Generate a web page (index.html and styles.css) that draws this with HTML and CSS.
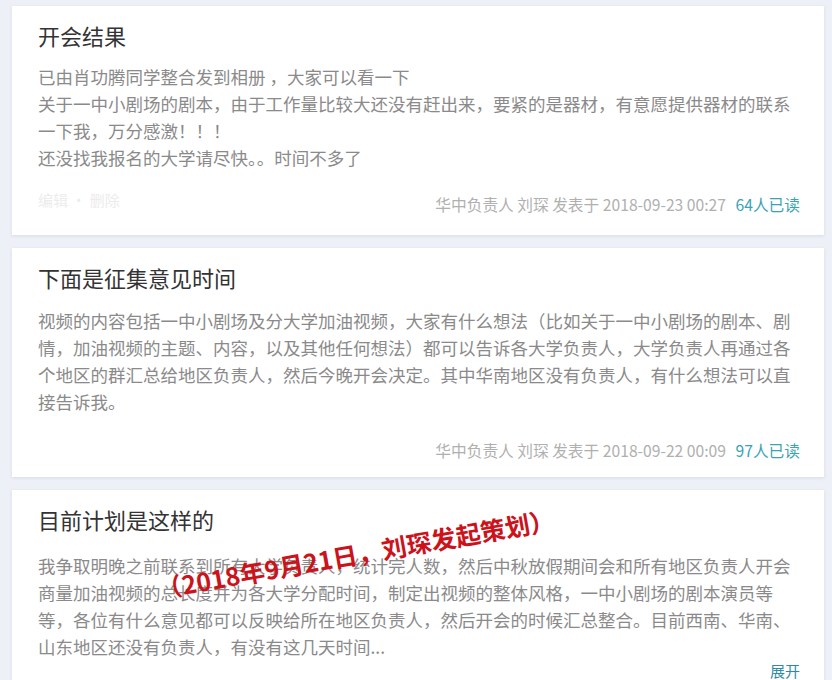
FILE: index.html
```html
<!DOCTYPE html>
<html lang="zh-CN">
<head>
<meta charset="UTF-8" />
<meta name="viewport" content="width=device-width, initial-scale=1" />
<title>公告</title>
<link rel="stylesheet" href="styles.css">
</head>
<body>

<div class="list">

  <div class="card">
    <div class="title">开会结果</div>
    <div class="content">已由肖功腾同学整合发到相册 ，大家可以看一下<br>关于一中小剧场的剧本，由于工作量比较大还没有赶出来，要紧的是器材，有意愿提供器材的联系一下我，万分感激！！！<br>还没找我报名的大学请尽快。。时间不多了</div>
    <div class="foot">
      <div class="ops">编辑 · 删除</div>
      <div class="meta">华中负责人 刘琛 发表于 2018-09-23 00:27 <span class="read">64人已读</span></div>
    </div>
  </div>

  <div class="card second">
    <div class="title">下面是征集意见时间</div>
    <div class="content">视频的内容包括一中小剧场及分大学加油视频，大家有什么想法（比如关于一中小剧场的剧本、剧情，加油视频的主题、内容，以及其他任何想法）都可以告诉各大学负责人，大学负责人再通过各个地区的群汇总给地区负责人，然后今晚开会决定。其中华南地区没有负责人，有什么想法可以直接告诉我。</div>
    <div class="foot">
      <div class="ops"></div>
      <div class="meta">华中负责人 刘琛 发表于 2018-09-22 00:09 <span class="read">97人已读</span></div>
    </div>
  </div>

  <div class="card last">
    <div class="title">目前计划是这样的</div>
    <div class="content">我争取明晚之前联系到所有大学负责人，统计完人数，然后中秋放假期间会和所有地区负责人开会商量加油视频的总长度并为各大学分配时间，制定出视频的整体风格，一中小剧场的剧本演员等等，各位有什么意见都可以反映给所在地区负责人，然后开会的时候汇总整合。目前西南、华南、山东地区还没有负责人，有没有这几天时间...</div>
    <div class="more">展开</div>
    <div class="stamp">（2018年9月21日，刘琛发起策划）</div>
  </div>

</div>

</body>
</html>
```

FILE: styles.css
```css
body {
  margin: 0;
  padding: 0;
  background-color: #eef0f7;
  font-family: "Noto Sans CJK SC", "Noto Sans", sans-serif;
  overflow: hidden;
}
.list {
  display: flex;
  flex-direction: column;
  gap: 13px;
  padding: 6px 8px 0 12px;
}
.card {
  position: relative;
  background-color: #fff;
  padding: 14px 24px 14px 26px;
  box-shadow: 0 1px 3px rgba(150, 160, 190, 0.25);
  height: 201px;
}
.card.last {
  height: 260px;
}
.title {
  font-size: 22px;
  line-height: 30px;
  color: #333;
}
.content {
  margin-top: 13px;
  font-size: 17.5px;
  line-height: 27px;
  color: #8a8a8a;
  width: 760px;
}
.foot {
  display: flex;
  justify-content: space-between;
  align-items: flex-end;
  margin-top: 18px;
}
.ops {
  font-size: 15px;
  color: #ececec;
  margin-bottom: 6px;
}
.meta {
  font-size: 15.7px;
  color: #b0b0b0;
}
.read {
  color: #3aa3b6;
  margin-left: 6px;
}
.second .content {
  margin-top: 15px;
}
.second .foot {
  margin-top: 24px;
}
.last .content {
  margin-top: 18px;
}
.more {
  text-align: right;
  font-size: 15px;
  line-height: 22px;
  color: #2f8aa3;
}
.stamp {
  position: absolute;
  left: 148px;
  top: 80px;
  font-size: 25px;
  font-weight: bold;
  color: #cc121b;
  transform: rotate(-10deg);
  transform-origin: left bottom;
  white-space: nowrap;
}
```
